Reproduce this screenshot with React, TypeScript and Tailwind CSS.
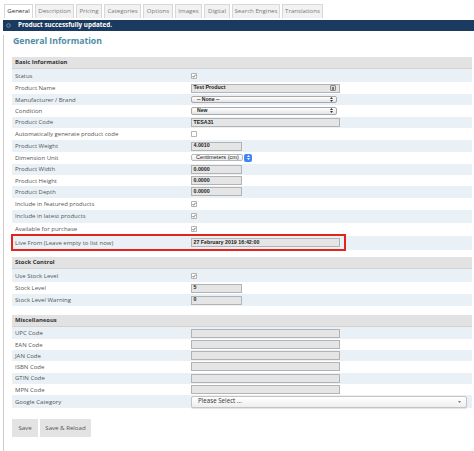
import React from "react";

type Control =
  | { kind: "check"; checked: boolean }
  | { kind: "text"; value: string; size: "wide" | "short"; icon?: boolean }
  | { kind: "select"; value: string }
  | { kind: "unit"; value: string }
  | { kind: "google"; value: string };

interface Row {
  label: string;
  h: string;
  control: Control;
  highlight?: boolean;
}

const tabs = [
  { name: "General", w: "w-[29px]", active: true },
  { name: "Description", w: "w-[39px]" },
  { name: "Pricing", w: "w-[26px]" },
  { name: "Categories", w: "w-[37px]" },
  { name: "Options", w: "w-[30px]" },
  { name: "Images", w: "w-[27px]" },
  { name: "Digital", w: "w-[26px]" },
  { name: "Search Engines", w: "w-[48px]" },
  { name: "Translations", w: "w-[41px]" },
];

const basicRows: Row[] = [
  { label: "Status", h: "h-[13px]", control: { kind: "check", checked: true } },
  { label: "Product Name", h: "h-[12px]", control: { kind: "text", value: "Test Product", size: "wide", icon: true } },
  { label: "Manufacturer / Brand", h: "h-[11px]", control: { kind: "select", value: "-- None --" } },
  { label: "Condition", h: "h-[11.5px]", control: { kind: "select", value: "New" } },
  { label: "Product Code", h: "h-[11.5px]", control: { kind: "text", value: "TESA31", size: "wide" } },
  { label: "Automatically generate product code", h: "h-[12px]", control: { kind: "check", checked: false } },
  { label: "Product Weight", h: "h-[12px]", control: { kind: "text", value: "4.0010", size: "short" } },
  { label: "Dimension Unit", h: "h-[11.5px]", control: { kind: "unit", value: "Centimeters (cm)" } },
  { label: "Product Width", h: "h-[11.5px]", control: { kind: "text", value: "0.0000", size: "short" } },
  { label: "Product Height", h: "h-[11px]", control: { kind: "text", value: "0.0000", size: "short" } },
  { label: "Product Depth", h: "h-[11.5px]", control: { kind: "text", value: "0.0000", size: "short" } },
  { label: "Include in featured products", h: "h-[12px]", control: { kind: "check", checked: true } },
  { label: "Include in latest products", h: "h-[13.5px]", control: { kind: "check", checked: true } },
  { label: "Available for purchase", h: "h-[12.5px]", control: { kind: "check", checked: true } },
  {
    label: "Live From (Leave empty to list now)",
    h: "h-[14px]",
    control: { kind: "text", value: "27 February 2019 16:42:00", size: "wide" },
    highlight: true,
  },
];

const stockRows: Row[] = [
  { label: "Use Stock Level", h: "h-[13px]", control: { kind: "check", checked: true } },
  { label: "Stock Level", h: "h-[12px]", control: { kind: "text", value: "5", size: "short" } },
  { label: "Stock Level Warning", h: "h-[12px]", control: { kind: "text", value: "0", size: "short" } },
];

const miscRows: Row[] = [
  { label: "UPC Code", h: "h-[12px]", control: { kind: "text", value: "", size: "wide" } },
  { label: "EAN Code", h: "h-[11px]", control: { kind: "text", value: "", size: "wide" } },
  { label: "JAN Code", h: "h-[11px]", control: { kind: "text", value: "", size: "wide" } },
  { label: "ISBN Code", h: "h-[11.5px]", control: { kind: "text", value: "", size: "wide" } },
  { label: "GTIN Code", h: "h-[11.5px]", control: { kind: "text", value: "", size: "wide" } },
  { label: "MPN Code", h: "h-[11px]", control: { kind: "text", value: "", size: "wide" } },
  { label: "Google Category", h: "h-[13px]", control: { kind: "google", value: "Please Select ..." } },
];

function UpDown({ color = "#333" }: { color?: string }) {
  return (
    <svg viewBox="0 0 6 10" className="w-[3px] h-[5px]">
      <path d="M3 0 L6 4 L0 4Z M0 6 L6 6 L3 10Z" fill={color} />
    </svg>
  );
}

function Checkbox({ checked }: { checked: boolean }) {
  return (
    <svg viewBox="0 0 12 12" className="w-[6px] h-[6px]">
      <rect x="0.75" y="0.75" width="10.5" height="10.5" rx="1.5" fill="#fff" stroke="#8a8a8a" strokeWidth="1.5" />
      {checked && <path d="M3 6.2 L5.2 8.6 L9.2 3.4" stroke="#555" strokeWidth="1.6" fill="none" />}
    </svg>
  );
}

function Field({ control }: { control: Control }) {
  switch (control.kind) {
    case "check":
      return <Checkbox checked={control.checked} />;
    case "text":
      return (
        <div
          className={`${control.size === "wide" ? "w-[149px]" : "w-[51px]"} h-[9px] bg-[#e5e5e5] border border-[#b3b3b3] flex items-center pl-[1.5px] pr-[3px] font-['Liberation_Sans',sans-serif] text-[5.3px] font-bold text-[#222] leading-none`}
        >
          <span className="flex-1">{control.value}</span>
          {control.icon && (
            <span className="w-[6px] h-[6px] border border-[#8a8a8a] bg-[#d9d9d9] rounded-[1px] flex items-center justify-center">
              <span className="w-[1.5px] h-[3px] bg-[#777]" />
            </span>
          )}
        </div>
      );
    case "select":
      return (
        <div className="w-[146px] h-[7.5px] rounded-[2px] border border-[#a9a9a9] bg-gradient-to-b from-white to-[#e4e4e4] flex items-center pl-[5px] pr-[3px] font-['Liberation_Sans',sans-serif] text-[5.1px] font-bold text-[#222] leading-none">
          <span className="flex-1">{control.value}</span>
          <UpDown />
        </div>
      );
    case "unit":
      return (
        <div className="flex items-center gap-[1px]">
          <div className="w-[52px] h-[7px] rounded-[2px] border border-[#b8b8b8] bg-gradient-to-b from-white to-[#ececec] flex items-center pl-[4px] font-['Liberation_Sans',sans-serif] text-[5.6px] text-[#222] leading-none">
            {control.value}
          </div>
          <div className="w-[8px] h-[8px] rounded-[2px] bg-[#3d86f3] flex items-center justify-center">
            <UpDown color="#ffffff" />
          </div>
        </div>
      );
    case "google":
      return (
        <div className="w-[276px] h-[12px] rounded-[2px] border border-[#c4c4c4] bg-gradient-to-b from-white to-[#eeeeee] shadow-[0_1px_1px_rgba(0,0,0,0.12)] flex items-center pl-[6px] pr-[5px] text-[6.2px] text-[#333] leading-none">
          <span className="flex-1">{control.value}</span>
          <svg viewBox="0 0 6 4" className="w-[3px] h-[2px]">
            <path d="M0 0 L6 0 L3 4Z" fill="#777" />
          </svg>
        </div>
      );
  }
}

function Section({ title, rows, className }: { title: string; rows: Row[]; className?: string }) {
  return (
    <div className={className}>
      <div className="h-[12px] bg-[#e2e2e2] border-b border-[#d2d2d2] flex items-center pl-[3px] text-[5.9px] font-bold text-[#333] leading-none">
        {title}
      </div>
      {rows.map((row, i) => (
        <div
          key={row.label}
          className={`${row.h} relative flex items-center ${i % 2 === 0 ? "bg-[#e9f1f6]" : "bg-white"}`}
        >
          <div className="w-[179px] pl-[3px] text-[6px] text-[#555] leading-none">{row.label}</div>
          <Field control={row.control} />
          {row.highlight && (
            <div className="absolute left-[-1.5px] top-[-1.5px] w-[335px] h-[17px] border-2 border-[#e2241c]" />
          )}
        </div>
      ))}
    </div>
  );
}

export default function App() {
  return (
    <div className="w-[474px] h-[451px] overflow-hidden bg-white font-['Open_Sans',sans-serif]">
      <div className="h-[20px] pt-[4px] pl-[4px] flex gap-[2px]">
        {tabs.map((t) => (
          <div
            key={t.name}
            className={`${t.w} h-[14px] border border-b-0 border-[#d8d8d8] flex items-center justify-center text-[6.1px] leading-none ${
              t.active ? "bg-white text-[#333]" : "bg-[#f2f2f2] text-[#7a7a7a]"
            }`}
          >
            {t.name}
          </div>
        ))}
      </div>
      <div className="ml-[3px] h-[11px] bg-[#1b3a5f] flex items-center pl-[3px] gap-[7px]">
        <svg viewBox="0 0 10 10" className="w-[5px] h-[5px]">
          <circle cx="5" cy="5" r="3.8" fill="#2c4c73" stroke="#8ea7c2" strokeWidth="1.2" />
        </svg>
        <span className="text-[6.3px] font-bold text-white leading-none">Product successfully updated.</span>
      </div>
      <div className="ml-[3px] h-[420px] border-l border-[#cdcdcd]">
        <h1 className="mt-[4px] mb-[10px] pl-[9px] h-[12px] flex items-center text-[8.7px] font-bold text-[#4f8ca5] leading-none">
          General Information
        </h1>
        <div className="ml-[8px] w-[460px]">
          <Section title="Basic Information" rows={basicRows} />
          <Section title="Stock Control" rows={stockRows} className="mt-[7.5px]" />
          <Section title="Miscellaneous" rows={miscRows} className="mt-[9px]" />
          <div className="mt-[11px] flex gap-[2px]">
            <button className="w-[26px] h-[18px] bg-[#e3e3e3] text-[6.1px] text-[#555] leading-none">Save</button>
            <button className="w-[51px] h-[18px] bg-[#e3e3e3] text-[6.1px] text-[#555] leading-none">
              Save &amp; Reload
            </button>
          </div>
        </div>
      </div>
    </div>
  );
}
